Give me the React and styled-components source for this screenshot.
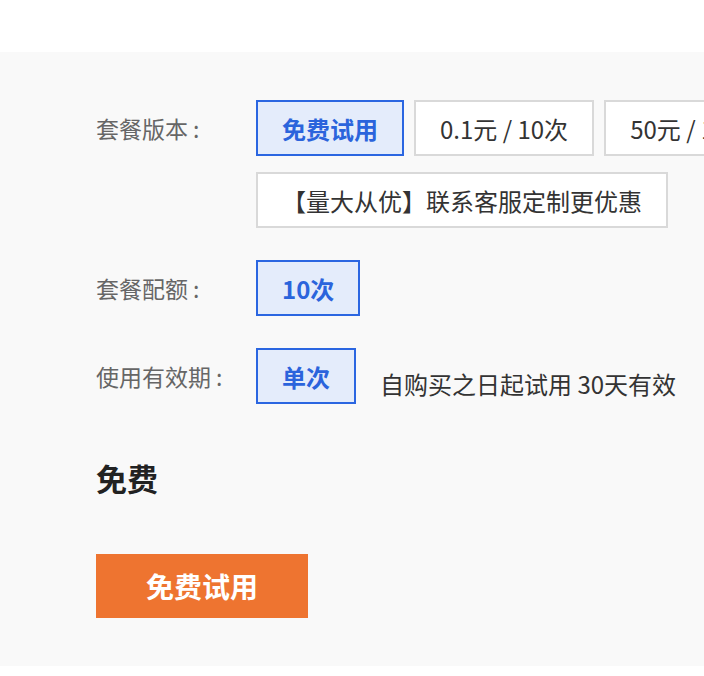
import React from 'react'
import styled, { createGlobalStyle } from 'styled-components'

const GlobalStyle = createGlobalStyle`
  html, body {
    margin: 0;
    padding: 0;
    background: #ffffff;
    overflow: hidden;
  }

  body {
    font-family: "PingFang SC", "Noto Sans CJK SC", "Noto Sans", sans-serif;
    color: #333333;
  }
`;

const Page = styled.div`
  padding-top: 52px;
`;

const Panel = styled.section`
  background: #f9f9f9;
  padding: 48px 0 48px 96px;
  overflow: hidden;
`;

const FieldRow = styled.div`
  display: grid;
  grid-template-columns: 160px 1fr;
  align-items: start;
  margin-bottom: ${(p) => (p.last ? '0' : '32px')};
`;

const Label = styled.div`
  height: 56px;
  line-height: 56px;
  font-size: 23px;
  color: #666666;
  white-space: nowrap;
`;

const Colon = styled.span`
  margin-left: 5px;
`;

const OptionGroup = styled.div`
  display: flex;
  flex-direction: column;
  gap: 16px;
`;

const OptionLine = styled.div`
  display: flex;
  align-items: center;
  gap: 10px;
  white-space: nowrap;
`;

const Option = styled.button`
  box-sizing: border-box;
  flex: none;
  height: 56px;
  padding: 0 24px;
  border: 2px solid ${(p) => (p.active ? '#2b66e1' : '#d9d9d9')};
  background: ${(p) => (p.active ? '#e4ecfb' : '#ffffff')};
  color: ${(p) => (p.active ? '#2b64dc' : '#333333')};
  font-family: inherit;
  font-size: 24px;
  font-weight: ${(p) => (p.active ? 700 : 400)};
  cursor: pointer;
  outline: none;
`;

const Note = styled.span`
  margin-left: 14px;
  margin-top: 14px;
  font-size: 24px;
  color: #333333;
`;

const Price = styled.h2`
  margin: 50px 0 0;
  height: 48px;
  line-height: 48px;
  font-size: 31px;
  font-weight: 700;
  color: #222222;
`;

const BuyButton = styled.button`
  display: block;
  margin-top: 52px;
  width: 212px;
  height: 64px;
  border: none;
  background: #ee7430;
  color: #ffffff;
  font-family: inherit;
  font-size: 28px;
  font-weight: 700;
  cursor: pointer;
`;

const plans = ['免费试用', '0.1元 / 10次', '50元 / 100次', '200元 / 500次']

const App = () => {
  return (
    <Page>
      <GlobalStyle />
      <Panel>
        <FieldRow>
          <Label>套餐版本<Colon>:</Colon></Label>
          <OptionGroup>
            <OptionLine>
              {plans.map((plan, i) => (
                <Option key={plan} active={i === 0}>{plan}</Option>
              ))}
            </OptionLine>
            <OptionLine>
              <Option>【量大从优】联系客服定制更优惠</Option>
            </OptionLine>
          </OptionGroup>
        </FieldRow>
        <FieldRow>
          <Label>套餐配额<Colon>:</Colon></Label>
          <OptionLine>
            <Option active>10次</Option>
          </OptionLine>
        </FieldRow>
        <FieldRow last>
          <Label>使用有效期<Colon>:</Colon></Label>
          <OptionLine>
            <Option active>单次</Option>
            <Note>自购买之日起试用 30天有效</Note>
          </OptionLine>
        </FieldRow>
        <Price>免费</Price>
        <BuyButton>免费试用</BuyButton>
      </Panel>
    </Page>
  );
}

export default App
